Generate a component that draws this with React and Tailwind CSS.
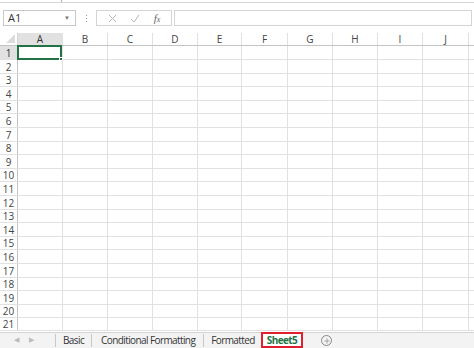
import { Plus } from "lucide-react";

const cols = ["A", "B", "C", "D", "E", "F", "G", "H", "I", "J", ""];
const colW = ["w-[45px]", "w-[45px]", "w-[45px]", "w-[45px]", "w-[44px]", "w-[46px]", "w-[45px]", "w-[45px]", "w-[45px]", "w-[46px]", "w-[45px]"];
const rows = Array.from({ length: 21 }, (_, i) => i + 1);

// 286px over 21 rows -> mix of 14 and 13
const rowH = (i) => (i % 5 === 2 || i % 5 === 4 || i === 20 ? "h-[13px]" : "h-[14px]");

const App = () => {
    return (
        <div className="w-[474px] h-[348px] overflow-hidden bg-white flex flex-col text-[#444]" style={{ fontFamily: "'Open Sans', 'Liberation Sans', sans-serif" }}>

            {/* RIBBON EDGE */}
            <div className="h-[10px] relative">
                <div className="absolute left-0 right-0 top-[2px] h-px bg-[#d6d6d6]"></div>
                <div className="absolute left-[61px] top-0 w-px h-[2px] bg-[#b0b0b0]"></div>
            </div>

            {/* FORMULA BAR */}
            <div className="h-[16px] flex items-stretch pl-[3px] pr-[2px]">
                <div className="w-[73px] border border-[#c8c8c8] flex items-center justify-between pl-[4px] pr-[3px] text-[11px] text-[#333]">
                    <span>A1</span>
                    <span className="text-[6px] text-[#777] mr-[2px]">▼</span>
                </div>
                <div className="w-[20px] flex flex-col items-center justify-center gap-[2px]">
                    <span className="w-[1px] h-[1px] bg-[#999]"></span>
                    <span className="w-[1px] h-[1px] bg-[#999]"></span>
                    <span className="w-[1px] h-[1px] bg-[#999]"></span>
                </div>
                <div className="w-[76px] border border-[#d4d4d4] flex items-center justify-around px-[4px]">
                    <svg width="9" height="9" viewBox="0 0 9 9"><path d="M1 1 L8 8 M8 1 L1 8" stroke="#b5b5b5" strokeWidth="1" /></svg>
                    <svg width="10" height="9" viewBox="0 0 10 9"><path d="M1 5 L4 8 L9 1" stroke="#b5b5b5" strokeWidth="1" fill="none" /></svg>
                    <span className="text-[11px] italic text-[#666]" style={{ fontFamily: "'Liberation Serif', serif" }}>f<span className="text-[8px]">x</span></span>
                </div>
                <div className="flex-1 ml-[2px] border border-[#d4d4d4]"></div>
            </div>

            <div className="h-[7px]"></div>

            {/* GRID */}
            <div className="flex-1 flex flex-col">
                {/* column headers */}
                <div className="flex h-[13px] border-b border-[#c4c4c4]">
                    <div className="w-[18px] shrink-0 border-r border-[#d4d4d4] relative">
                        <div className="absolute right-[2px] bottom-[2px] w-0 h-0 border-l-[9px] border-l-transparent border-b-[9px] border-b-[#dcdcdc]"></div>
                    </div>
                    {cols.map((c, i) => (
                        <div
                            key={i}
                            className={`${colW[i]} shrink-0 border-r border-[#e1e1e1] flex items-center justify-center text-[10px] leading-none ${i === 0 ? "bg-[#e1e1e1] text-[#333]" : ""}`}
                        >
                            {c}
                        </div>
                    ))}
                </div>

                {rows.map((r, ri) => (
                    <div key={r} className={`flex ${rowH(ri)} border-b border-[#e1e1e1]`}>
                        <div className={`w-[18px] shrink-0 border-r border-[#c4c4c4] flex items-center justify-center text-[10px] leading-none ${r === 1 ? "bg-[#e1e1e1] text-[#333]" : ""}`}>
                            {r}
                        </div>
                        {cols.map((c, i) => (
                            <div key={i} className={`${colW[i]} shrink-0 border-r border-[#e1e1e1] relative`}>
                                {r === 1 && i === 0 && (
                                    <div className="absolute -left-[1px] -top-[1px] -right-0 -bottom-[1px] border-2 border-[#217346]">
                                        <div className="absolute -right-[3px] -bottom-[3px] w-[4px] h-[4px] bg-[#217346] border border-white"></div>
                                    </div>
                                )}
                            </div>
                        ))}
                    </div>
                ))}
            </div>

            {/* SHEET TABS */}
            <div className="h-[16px] shrink-0 bg-[#f3f3f3] border-t border-[#d4d4d4] flex items-stretch text-[10px] tracking-[-0.6px] text-[#333]">
                <div className="w-[55px] flex items-center pl-[14px] gap-[11px] text-[7px] text-[#bbb]">
                    <span>◀</span>
                    <span>▶</span>
                </div>
                <div className="w-px bg-[#c8c8c8] my-[1px]"></div>
                <div className="px-[7px] flex items-center">Basic</div>
                <div className="w-px bg-[#c8c8c8] my-[1px]"></div>
                <div className="pl-[9px] pr-[8px] flex items-center">Conditional Formatting</div>
                <div className="w-px bg-[#c8c8c8] my-[1px]"></div>
                <div className="pl-[7px] pr-[6px] flex items-center">Formatted</div>
                <div className="-mt-[1px] px-[4px] flex items-center bg-white border-2 border-[#e0202e] font-bold text-[#217346]">Sheet5</div>
                <div className="ml-[18px] flex items-center">
                    <span className="w-[11px] h-[11px] rounded-full border border-[#888] flex items-center justify-center">
                        <Plus size={8} strokeWidth={1.5} color="#666" />
                    </span>
                </div>
            </div>
        </div>
    );
};

export default App;
